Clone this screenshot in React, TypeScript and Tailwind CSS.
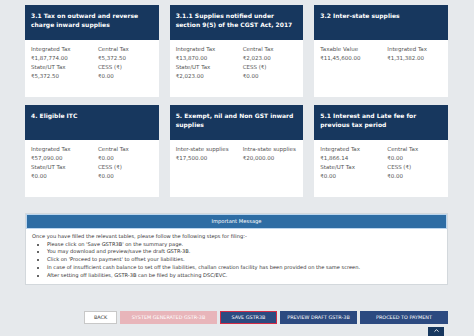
import { ChevronUp } from "lucide-react";

interface Field {
  label: string;
  value: string;
}

interface Card {
  title: string;
  fields: Field[];
}

const cards: Card[] = [
  {
    title: "3.1 Tax on outward and reverse charge inward supplies",
    fields: [
      { label: "Integrated Tax", value: "₹1,87,774.00" },
      { label: "Central Tax", value: "₹5,372.50" },
      { label: "State/UT Tax", value: "₹5,372.50" },
      { label: "CESS (₹)", value: "₹0.00" },
    ],
  },
  {
    title: "3.1.1 Supplies notified under section 9(5) of the CGST Act, 2017",
    fields: [
      { label: "Integrated Tax", value: "₹13,870.00" },
      { label: "Central Tax", value: "₹2,023.00" },
      { label: "State/UT Tax", value: "₹2,023.00" },
      { label: "CESS (₹)", value: "₹0.00" },
    ],
  },
  {
    title: "3.2 Inter-state supplies",
    fields: [
      { label: "Taxable Value", value: "₹11,45,600.00" },
      { label: "Integrated Tax", value: "₹1,31,382.00" },
    ],
  },
  {
    title: "4. Eligible ITC",
    fields: [
      { label: "Integrated Tax", value: "₹57,090.00" },
      { label: "Central Tax", value: "₹0.00" },
      { label: "State/UT Tax", value: "₹0.00" },
      { label: "CESS (₹)", value: "₹0.00" },
    ],
  },
  {
    title: "5. Exempt, nil and Non GST inward supplies",
    fields: [
      { label: "Inter-state supplies", value: "₹17,500.00" },
      { label: "Intra-state supplies", value: "₹20,000.00" },
    ],
  },
  {
    title: "5.1 Interest and Late fee for previous tax period",
    fields: [
      { label: "Integrated Tax", value: "₹1,866.14" },
      { label: "Central Tax", value: "₹0.00" },
      { label: "State/UT Tax", value: "₹0.00" },
      { label: "CESS (₹)", value: "₹0.00" },
    ],
  },
];

const steps = [
  "Please click on 'Save GSTR3B' on the summary page.",
  "You may download and preview/save the draft GSTR-3B.",
  "Click on 'Proceed to payment' to offset your liabilities.",
  "In case of insufficient cash balance to set off the liabilities, challan creation facility has been provided on the same screen.",
  "After setting off liabilities, GSTR-3B can be filed by attaching DSC/EVC.",
];

function SummaryCard({ card }: { card: Card }) {
  return (
    <div className="flex flex-col h-[92px] bg-white">
      <div className="h-[35px] bg-[#17375e] px-[6px] pt-[6px] text-[6px] leading-[9px] font-bold text-white">
        {card.title}
      </div>
      <div className="grid grid-cols-[67px_1fr] px-[6px] pt-[5px] text-[5.5px] leading-[9px] text-[#555]">
        {card.fields.map((f, i) => (
          <div key={i}>
            <div>{f.label}</div>
            <div>{f.value}</div>
          </div>
        ))}
      </div>
    </div>
  );
}

export default function App() {
  return (
    <div
      className="w-[474px] h-[336px] overflow-hidden bg-[#e6e9ec] pl-[25px] pt-[5px]"
      style={{ fontFamily: '"DejaVu Sans", Verdana, sans-serif' }}
    >
      <div className="w-[423px]">
        <div className="grid grid-cols-3 gap-x-[11px] gap-y-[8px]">
          {cards.map((c, i) => (
            <SummaryCard key={i} card={c} />
          ))}
        </div>

        {/* Important message */}
        <div className="mt-[16px] border border-[#d3d8dc] bg-white">
          <div className="h-[15px] bg-[#2e6da4] border border-[#bcd6ee] flex items-center justify-center text-[5.2px] text-white">
            Important Message
          </div>
          <div className="px-[6px] pt-[4px] pb-[5px] text-[5.1px] leading-[7.7px] text-[#333]">
            <p>Once you have filled the relevant tables, please follow the following steps for filing:-</p>
            <ul className="list-disc pl-[15px]">
              {steps.map((s, i) => (
                <li key={i}>{s}</li>
              ))}
            </ul>
          </div>
        </div>

        {/* Actions */}
        <div className="mt-[26px] flex justify-end gap-[3px] text-[4.9px]">
          <button className="uppercase w-[33px] h-[13px] bg-white border border-[#c8c8c8] text-[#333]">
            Back
          </button>
          <button className="uppercase w-[97px] h-[13px] bg-[#e8b5ba] text-white">
            System Generated GSTR-3B
          </button>
          <button className="uppercase w-[57px] h-[13px] bg-[#2c4a80] border border-[#d22b45] text-white">
            Save GSTR3B
          </button>
          <button className="uppercase w-[77px] h-[13px] bg-[#2c4a80] text-white">
            Preview Draft GSTR-3B
          </button>
          <button className="uppercase w-[88px] h-[13px] bg-[#2c4a80] text-white">
            Proceed to Payment
          </button>
        </div>
        <div className="flex justify-end pr-[4px] mt-[3px]">
          <div className="w-[16px] h-[10px] bg-[#17375e] flex justify-center">
            <ChevronUp className="w-[7px] h-[7px] text-white" strokeWidth={3} />
          </div>
        </div>
      </div>
    </div>
  );
}
